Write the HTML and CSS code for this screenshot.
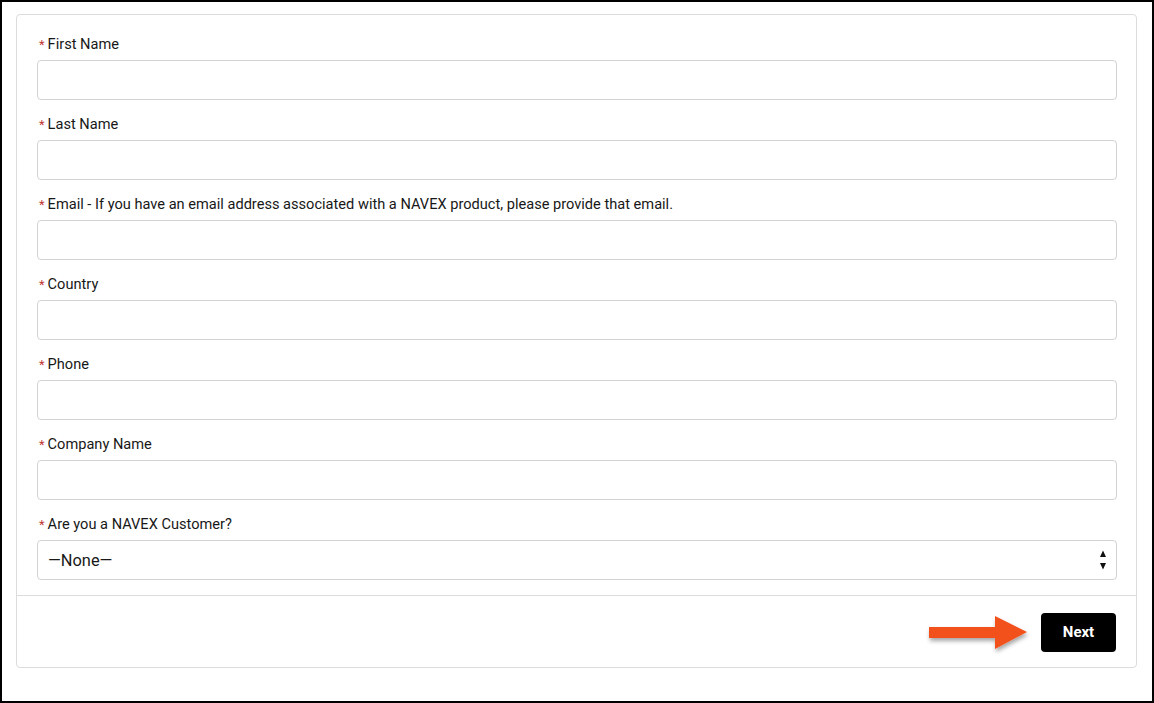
FILE: index.html
```html
<!DOCTYPE html>
<html>
<head>
<meta charset="utf-8">
<link rel="stylesheet" href="styles.css">
</head>
<body>
<div class="frame">
  <div class="card">
    <div class="card-body">
      <div class="field">
        <label class="label"><span class="req">*</span>First Name</label>
        <input class="input" type="text">
      </div>
      <div class="field">
        <label class="label"><span class="req">*</span>Last Name</label>
        <input class="input" type="text">
      </div>
      <div class="field">
        <label class="label"><span class="req">*</span>Email - If you have an email address associated with a NAVEX product, please provide that email.</label>
        <input class="input" type="text">
      </div>
      <div class="field">
        <label class="label"><span class="req">*</span>Country</label>
        <input class="input" type="text">
      </div>
      <div class="field">
        <label class="label"><span class="req">*</span>Phone</label>
        <input class="input" type="text">
      </div>
      <div class="field">
        <label class="label"><span class="req">*</span>Company Name</label>
        <input class="input" type="text">
      </div>
      <div class="field">
        <label class="label"><span class="req">*</span>Are you a NAVEX Customer?</label>
        <div class="select">
          <span class="select-value">—None—</span>
          <svg class="select-arrows" width="6" height="22" viewBox="0 0 6 22"><path d="M3 1.5 L6 8 H0 Z M3 20.5 L6 14 H0 Z" fill="#111"/></svg>
        </div>
      </div>
    </div>
    <div class="card-footer">
      <svg class="arrow" width="110" height="42" viewBox="0 0 110 42">
        <defs>
          <filter id="sh" x="-20%" y="-30%" width="150%" height="180%">
            <feDropShadow dx="1" dy="3" stdDeviation="2" flood-color="#000" flood-opacity="0.35"/>
          </filter>
        </defs>
        <path d="M6 15 H72 V4 L104 20 L72 37 V26 H6 Z" fill="#f2511b" filter="url(#sh)"/>
      </svg>
      <button class="btn">Next</button>
    </div>
  </div>
</div>
</body>
</html>
```
FILE: styles.css
```css
* { box-sizing: border-box; }
html, body { margin: 0; padding: 0; background: #fff; }
.frame {
  width: 1154px;
  height: 703px;
  border: 2px solid #000;
  padding: 12px 15px 0 14px;
  font-family: Roboto, "Liberation Sans", sans-serif;
  color: #181818;
}
.card {
  border: 1px solid #dcdcdc;
  border-radius: 4px;
  background: #fff;
  height: 654px;
  display: flex;
  flex-direction: column;
}
.card-body {
  padding: 19px 19px 15px 20px;
  display: flex;
  flex-direction: column;
  gap: 14px;
  border-bottom: 1px solid #dcdcdc;
}
.field { display: flex; flex-direction: column; }
.label {
  font-size: 14.6px;
  line-height: 20px;
  height: 20px;
  margin-bottom: 6px;
  padding-left: 2px;
  display: flex;
  align-items: baseline;
  white-space: nowrap;
}
.req { color: #c23934; margin-right: 3px; font-size: 13px; line-height: 20px; }
.input {
  height: 40px;
  border: 1px solid #d2d2d2;
  border-radius: 4px;
  background: #fff;
  width: 100%;
  font: inherit;
}
.select {
  height: 40px;
  border: 1px solid #d2d2d2;
  border-radius: 4px;
  display: flex;
  align-items: center;
  justify-content: space-between;
  padding: 0 10px 0 10px;
}
.select-value { font-size: 16.4px; color: #181818; }
.select-arrows { display: block; }
.card-footer {
  flex: 1;
  display: flex;
  justify-content: flex-end;
  align-items: center;
  padding: 1px 20px 0 0;
  gap: 8px;
}
.arrow { display: block; margin-top: 2px; }
.btn {
  width: 75px;
  height: 39px;
  background: #000;
  color: #fff;
  border: none;
  border-radius: 4px;
  font-family: Roboto, "Liberation Sans", sans-serif;
  font-size: 15px;
  font-weight: 700;
}
```
